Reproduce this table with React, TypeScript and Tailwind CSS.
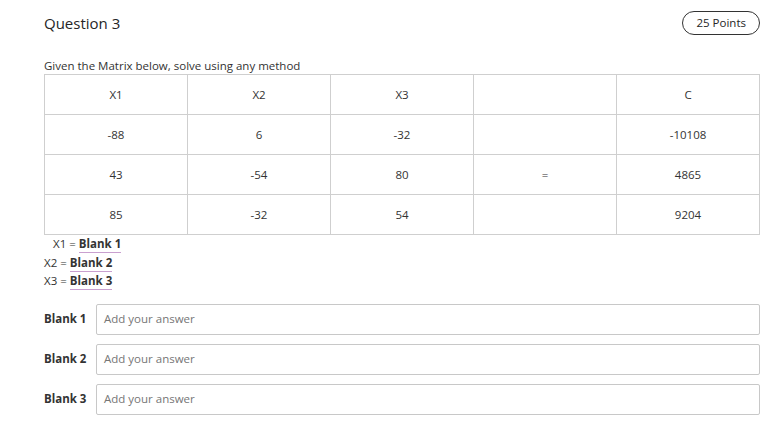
import React from 'react';

const headers = ['X1', 'X2', 'X3', '', 'C'];
const rows = [
  ['-88', '6', '-32', '', '-10108'],
  ['43', '-54', '80', '=', '4865'],
  ['85', '-32', '54', '', '9204'],
];

const Blank = ({ n }: { n: number }) => (
  <span className="font-bold text-[#333] border-b border-[#c9a0cf] pb-[1px]">Blank {n}</span>
);

export default function App() {
  return (
    <div
      className="w-[777px] h-[433px] bg-white text-[#333] overflow-hidden"
      style={{ fontFamily: '"Open Sans", "Noto Sans", sans-serif' }}
    >
      <div className="pl-[44px] pr-[17px]">
        {/* header */}
        <div className="flex items-center justify-between pt-[11px] h-[35px]">
          <h1 className="text-[15px] text-[#262626] leading-[24px]">Question 3</h1>
          <span className="h-[24px] px-[13px] rounded-full border border-[#333] text-[11.5px] leading-[22px] text-[#262626]">
            25 Points
          </span>
        </div>

        <p className="mt-[22px] text-[11.5px] leading-[17px] text-[#333]">
          Given the Matrix below, solve using any method
        </p>

        {/* matrix */}
        <table className="w-[716px] border-collapse table-fixed text-[11.5px] text-[#333]">
          <tbody>
            {[headers, ...rows].map((r, i) => (
              <tr key={i} className="h-[40px]">
                {r.map((c, j) => (
                  <td key={j} className="border border-[#cfcfcf] text-center align-middle">
                    {c}
                  </td>
                ))}
              </tr>
            ))}
          </tbody>
        </table>

        {/* equations */}
        <div className="mt-0 text-[11.5px] leading-[18.5px]">
          <div className="pl-[9px]">X1 = <Blank n={1} /></div>
          <div>X2 = <Blank n={2} /></div>
          <div>X3 = <Blank n={3} /></div>
        </div>

        {/* answers */}
        <div className="mt-[13px] flex flex-col gap-[9px]">
          {[1, 2, 3].map((n) => (
            <div key={n} className="flex items-center">
              <span className="w-[52px] text-[11.5px] font-bold text-[#333]">Blank {n}</span>
              <div className="flex-1 h-[31px] border border-[#c8c8c8] rounded-[2px] flex items-center px-[7px] text-[11.5px] text-[#767676]">
                Add your answer
              </div>
            </div>
          ))}
        </div>
      </div>
    </div>
  );
}
